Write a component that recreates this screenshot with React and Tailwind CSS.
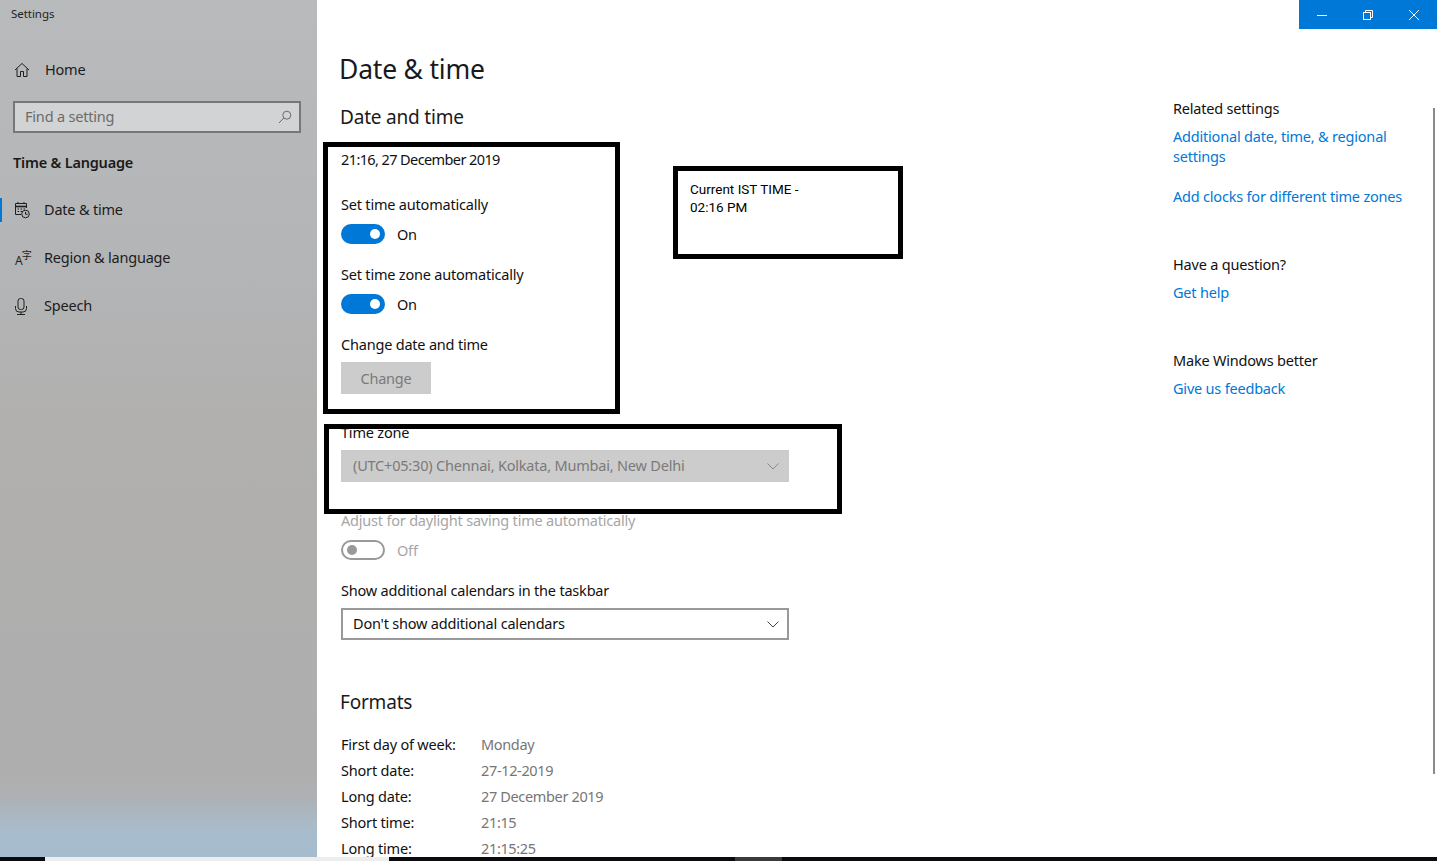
import React from 'react';

const HomeIcon = () => (
  <svg width="16" height="16" viewBox="0 0 16 16" fill="none" stroke="#1f1f1f" strokeWidth="1">
    <path d="M1 8 L8 1.5 L15 8" />
    <path d="M3 6.5 V14.5 H6.5 V9.5 H9.5 V14.5 H13 V6.5" />
  </svg>
);

const CalendarIcon = () => (
  <svg width="16" height="18" viewBox="0 0 16 18" fill="none" stroke="#1f1f1f" strokeWidth="1">
    <path d="M7 13.5 H1.5 V2.5 H12.5 V7" />
    <path d="M1.5 5.5 H12.5" strokeWidth="1.6" />
    <path d="M4 1 V3 M10 1 V3" />
    <path d="M3.5 8 H5 M6.5 8 H8 M9.5 8 H11 M3.5 10.5 H5 M6.5 10.5 H8" />
    <circle cx="11.5" cy="13" r="3.8" />
    <path d="M11.5 10.8 V13.2 H13.6" />
  </svg>
);

const RegionIcon = () => (
  <div className="flex w-[16px] h-[18px] pl-[1px] text-[#1f1f1f] tracking-normal">
    <span className="self-end text-[12px] leading-[12px] font-['Noto_Sans',sans-serif]">A</span>
    <span className="self-start -ml-[1px] text-[10px] leading-[11px] font-['Noto_Sans_CJK_SC',sans-serif]">字</span>
  </div>
);

const MicIcon = () => (
  <svg width="12" height="17" viewBox="0 0 12 17" fill="none" stroke="#1f1f1f" strokeWidth="1" className="ml-[1px]">
    <rect x="3" y="0.5" width="6" height="11" rx="2.5" />
    <path d="M0.5 8 V10.5 A3.5 3.5 0 0 0 4 14 H8 A3.5 3.5 0 0 0 11.5 10.5 V8" />
    <path d="M6 14 V16.5 M2 16.5 H10" />
  </svg>
);

const SearchIcon = () => (
  <svg width="14" height="14" viewBox="0 0 14 14" fill="none" stroke="#6b6b6b" strokeWidth="1">
    <circle cx="8.8" cy="5.2" r="4" />
    <path d="M5.8 8 L1 13" />
  </svg>
);

const MinimizeIcon = () => (
  <svg width="10" height="10" viewBox="0 0 10 10" fill="none" stroke="#ffffff" strokeWidth="1">
    <path d="M0 5.5 H10" />
  </svg>
);

const RestoreIcon = () => (
  <svg width="10" height="10" viewBox="0 0 10 10" fill="none" stroke="#ffffff" strokeWidth="1">
    <rect x="0.5" y="2.5" width="7" height="7" />
    <path d="M2.5 2.5 V0.5 H9.5 V7.5 H7.5" />
  </svg>
);

const CloseIcon = () => (
  <svg width="10" height="10" viewBox="0 0 10 10" fill="none" stroke="#ffffff" strokeWidth="1">
    <path d="M0 0 L10 10 M10 0 L0 10" />
  </svg>
);

const Chevron = ({ color }) => (
  <svg width="12" height="7" viewBox="0 0 12 7" fill="none" stroke={color} strokeWidth="1">
    <path d="M0.5 0.5 L6 6 L11.5 0.5" />
  </svg>
);

const NavItem = ({ icon, label, active }) => (
  <div className="relative flex items-center h-[48px] pl-[14px] text-[#1c1c1c]">
    {active && <div className="absolute left-0 top-[12px] w-[2px] h-[24px] bg-[#0078d7]" />}
    <div className="w-[30px] flex items-center">{icon}</div>
    <span className="mb-[2px]">{label}</span>
  </div>
);

const Toggle = ({ label }) => (
  <div className="flex items-center h-[20px] mt-[10px]">
    <div className="flex items-center justify-end w-[44px] h-[20px] rounded-full bg-[#0078d7] pr-[5px]">
      <div className="w-[10px] h-[10px] rounded-full bg-white" />
    </div>
    <span className="ml-[12px]">{label}</span>
  </div>
);

const FormatRow = ({ label, value }) => (
  <div className="flex h-[26px] items-center">
    <span className="w-[140px]">{label}</span>
    <span className="text-[#767676] tracking-[-0.35px]">{value}</span>
  </div>
);

const RelatedBlock = ({ title, links, className }) => (
  <div className={className}>
    <div className="h-[20px] leading-[20px]">{title}</div>
    <div className="mt-[8px]">
      {links.map((link) => (
        <div key={link} className="text-[#0078d7] leading-[20px] mb-[20px] last:mb-0">{link}</div>
      ))}
    </div>
  </div>
);

export default function App() {
  return (
    <div className="flex flex-col h-[861px] w-full overflow-hidden bg-white text-[14.5px] leading-[20px] tracking-[-0.2px] text-[#111] font-['Noto_Sans',sans-serif]">
      <div className="flex flex-1 min-h-0">
        {/* Sidebar */}
        <aside className="w-[317px] shrink-0 bg-[linear-gradient(180deg,#b9babb_0%,#b4b6b8_25%,#b1b0af_50%,#aeaeae_90%,#aeb1b5_93%,#a8bccc_97%,#a5bcd0_100%)]">
          <div className="pl-[11px] pt-[6px] h-[46px] text-[11.5px] leading-[16px] text-[#222] tracking-[-0.05px]">Settings</div>
          <div className="flex items-center h-[48px] pl-[14px] text-[#1c1c1c]">
            <div className="w-[31px] flex items-center"><HomeIcon /></div>
            <span className="mb-[2px]">Home</span>
          </div>
          <div className="flex items-center justify-between ml-[13px] mr-[16px] mt-[7px] h-[32px] border-2 border-[#777] bg-[#d2d3d4] pl-[10px] pr-[7px] text-[#6b6b6b]">
            <span className="mb-[2px]">Find a setting</span>
            <SearchIcon />
          </div>
          <div className="pl-[13px] mt-[19px] font-semibold text-[#1a1a1a]">Time &amp; Language</div>
          <div className="mt-[14px]">
            <NavItem active icon={<CalendarIcon />} label="Date & time" />
            <NavItem icon={<RegionIcon />} label="Region & language" />
            <NavItem icon={<MicIcon />} label="Speech" />
          </div>
        </aside>

        {/* Contenu principal */}
        <main className="relative flex-1 min-w-0 overflow-hidden flex flex-col">
          <div className="flex justify-end h-[29px] shrink-0">
            <div className="flex w-[138px] bg-[#0078d7] text-white">
              <div className="w-[46px] flex items-center justify-center"><MinimizeIcon /></div>
              <div className="w-[46px] flex items-center justify-center"><RestoreIcon /></div>
              <div className="w-[46px] flex items-center justify-center"><CloseIcon /></div>
            </div>
          </div>

          <div className="flex flex-1 min-h-0">
            <div className="w-[856px] pl-[24px] shrink-0">
              <h1 className="text-[26.5px] leading-[38px] -ml-[2px] mt-[21px] font-normal tracking-[-0.2px] text-[#1a1a1a]">Date &amp; time</h1>
              <h2 className="text-[19px] leading-[28px] -ml-[1px] mt-[15px] font-normal tracking-[-0.2px] text-[#1a1a1a]">Date and time</h2>

              <div className="mt-[18px] tracking-[-0.6px]">21:16, 27 December 2019</div>
              <div className="mt-[25px]">Set time automatically</div>
              <Toggle label="On" />
              <div className="mt-[20px]">Set time zone automatically</div>
              <Toggle label="On" />
              <div className="mt-[20px]">Change date and time</div>
              <div className="mt-[8px] flex items-center justify-center w-[90px] h-[32px] bg-[#cccccc] text-[#7a7a7a]">Change</div>

              <div className="mt-[28px]">Time zone</div>
              <div className="mt-[8px] flex items-center justify-between w-[448px] h-[32px] bg-[#cccccc] pl-[12px] pr-[10px] text-[#7a7a7a]">
                <span className="mb-[2px]">(UTC+05:30) Chennai, Kolkata, Mumbai, New Delhi</span>
                <Chevron color="#8a8a8a" />
              </div>

              <div className="mt-[28px] text-[#a6a6a6]">Adjust for daylight saving time automatically</div>
              <div className="flex items-center h-[20px] mt-[10px] text-[#a6a6a6]">
                <div className="flex items-center w-[44px] h-[20px] rounded-full border-2 border-[#999] pl-[4px]">
                  <div className="w-[10px] h-[10px] rounded-full bg-[#999]" />
                </div>
                <span className="ml-[12px]">Off</span>
              </div>

              <div className="mt-[20px]">Show additional calendars in the taskbar</div>
              <div className="mt-[8px] flex items-center justify-between w-[448px] h-[32px] border-2 border-[#999] pl-[10px] pr-[8px]">
                <span className="mb-[2px]">Don't show additional calendars</span>
                <Chevron color="#444444" />
              </div>

              <h2 className="text-[19px] leading-[28px] -ml-[1px] mt-[48px] font-normal tracking-[-0.2px] text-[#1a1a1a]">Formats</h2>
              <div className="mt-[15px]">
                <FormatRow label="First day of week:" value="Monday" />
                <FormatRow label="Short date:" value="27-12-2019" />
                <FormatRow label="Long date:" value="27 December 2019" />
                <FormatRow label="Short time:" value="21:15" />
                <FormatRow label="Long time:" value="21:15:25" />
              </div>
            </div>

            {/* Colonne droite */}
            <div className="flex-1 min-w-0 pt-[69px]">
              <RelatedBlock title="Related settings" links={['Additional date, time, & regional settings', 'Add clocks for different time zones']} className="w-[240px]" />
              <RelatedBlock title="Have a question?" links={['Get help']} className="mt-[48px]" />
              <RelatedBlock title="Make Windows better" links={['Give us feedback']} className="mt-[48px]" />
            </div>
          </div>

          {/* Barre de défilement */}
          <div className="absolute right-[2px] top-[108px] w-[2px] h-[666px] bg-[#8a8a8a]" />

          {/* Annotations */}
          <div className="absolute left-[6px] top-[142px] w-[297px] h-[272px] border-[5px] border-black" />
          <div className="absolute left-[7px] top-[424px] w-[518px] h-[90px] border-[5px] border-black" />
          <div className="absolute left-[356px] top-[166px] w-[230px] h-[93px] border-[5px] border-black bg-white pl-[12px] pt-[9px] text-[13.5px] leading-[18px] text-black tracking-normal font-['Roboto',sans-serif]">
            <div>Current IST TIME -</div>
            <div>02:16 PM</div>
          </div>
        </main>
      </div>

      {/* Barre des tâches */}
      <div className="flex h-[4px] shrink-0 bg-[#0b0b0f]">
        <div className="ml-[45px] w-[344px] bg-[#ededed]" />
        <div className="ml-[346px] w-[47px] bg-[#3a3a3a]" />
      </div>
    </div>
  );
}
